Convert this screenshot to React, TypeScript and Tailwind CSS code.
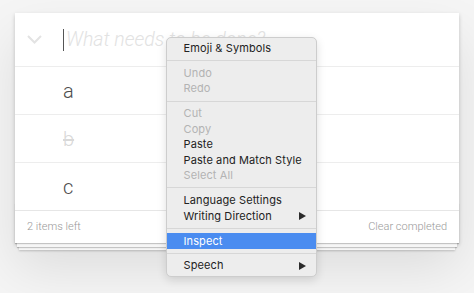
const todos = [
  { title: "a", done: false },
  { title: "b", done: true },
  { title: "c", done: false },
];

type MenuEntry =
  | { sep: true }
  | { label: string; disabled?: boolean; sub?: boolean; active?: boolean; sep?: false };

const menu: MenuEntry[] = [
  { label: "Emoji & Symbols" },
  { sep: true },
  { label: "Undo", disabled: true },
  { label: "Redo", disabled: true },
  { sep: true },
  { label: "Cut", disabled: true },
  { label: "Copy", disabled: true },
  { label: "Paste" },
  { label: "Paste and Match Style" },
  { label: "Select All", disabled: true },
  { sep: true },
  { label: "Language Settings" },
  { label: "Writing Direction", sub: true },
  { sep: true },
  { label: "Inspect", active: true },
  { sep: true },
  { label: "Speech", sub: true },
];

function Arrow() {
  return (
    <svg width="7" height="8" viewBox="0 0 7 8">
      <path d="M0 0 L7 4 L0 8 Z" fill="#2b2b2b" />
    </svg>
  );
}

function ContextMenu() {
  return (
    <div className="absolute left-[166px] top-[37px] w-[151px] rounded-[5px] border border-[#cdcdcd] bg-[#ededed] py-[2.5px] shadow-[0_3px_10px_rgba(0,0,0,0.13)] font-['Inter','Liberation_Sans',sans-serif] text-[11px] tracking-[0.1px]">
      {menu.map((m, i) =>
        m.sep ? (
          <div key={i} className="my-[4.2px] h-px bg-[#d7d7d7]" />
        ) : (
          <div
            key={i}
            className={
              "flex h-[15.5px] items-center justify-between pl-[16.5px] pr-[10px] " +
              (m.active
                ? "bg-[#4a8cf0] text-white"
                : m.disabled
                ? "text-[#b3b3b3]"
                : "text-[#222]")
            }
          >
            <span>{m.label}</span>
            {m.sub && <Arrow />}
          </div>
        )
      )}
    </div>
  );
}

export default function App() {
  return (
    <div className="relative h-[293px] w-[474px] overflow-hidden bg-[#f5f5f5] pl-[15px] pt-[13px] font-['Roboto','Liberation_Sans',sans-serif]">
      <div className="w-[444px] bg-white shadow-[0_2px_4px_rgba(0,0,0,0.2),0_25px_50px_rgba(0,0,0,0.1)]">
        <div className="flex h-[53px] items-center pl-3">
          <svg width="15" height="9" viewBox="0 0 15 9">
            <path d="M1 1 L7.5 7.5 L14 1" fill="none" stroke="#e3e3e3" strokeWidth="2" />
          </svg>
          <div className="ml-[21px] h-[22px] w-px bg-[#555]" />
          <span className="ml-[2px] text-[19.5px] font-light italic text-[#e2e2e2]">
            What needs to be done?
          </span>
        </div>
        {todos.map((t) => (
          <div
            key={t.title}
            className="flex h-[48px] items-center border-t border-[#ededed] pl-[48px]"
          >
            <span
              className={
                "text-[20px] font-light " +
                (t.done ? "text-[#d9d9d9] line-through" : "text-[#4d4d4d]")
              }
            >
              {t.title}
            </span>
          </div>
        ))}
        <div className="relative flex h-[33px] items-center justify-between border-t border-[#e6e6e6] px-3 text-[11px] font-light text-[#999] before:absolute before:inset-x-0 before:bottom-0 before:h-[40px] before:content-[''] before:shadow-[0_1px_1px_rgba(0,0,0,0.2),0_6px_0_-2px_#f6f6f6,0_7px_1px_-2px_rgba(0,0,0,0.2),0_11px_0_-4px_#f6f6f6,0_12px_2px_-4px_rgba(0,0,0,0.2)]">
          <span className="relative">2 items left</span>
          <span className="relative">Clear completed</span>
        </div>
      </div>
      <ContextMenu />
    </div>
  );
}
